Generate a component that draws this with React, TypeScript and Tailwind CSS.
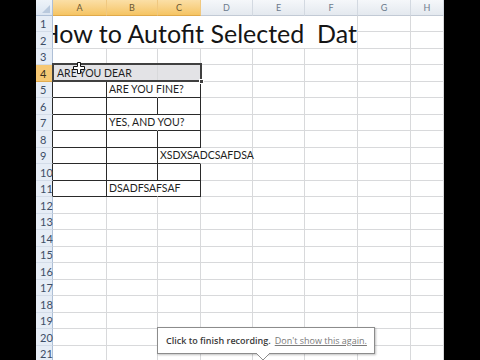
import React from 'react';

type Key = 'grid' | 'dark' | 'none';

const RIGHT: Record<Key, string> = {
  grid: 'border-r border-r-[#d8d9db]',
  dark: 'border-r border-r-[#2a2a2a]',
  none: 'border-r border-r-transparent',
};
const BOTTOM: Record<Key, string> = {
  grid: 'border-b border-b-[#d8d9db]',
  dark: 'border-b border-b-[#2a2a2a]',
  none: 'border-b border-b-transparent',
};

const LETTERS = ['A', 'B', 'C', 'D', 'E', 'F', 'G', 'H'];

const TEXTS: Record<string, string> = {
  '4-1': 'ARE YOU DEAR',
  '5-2': 'ARE YOU FINE?',
  '7-2': 'YES, AND YOU?',
  '9-3': 'XSDXSADCSAFDSA',
  '11-2': 'DSADFSAFSAF',
};

function rightKey(r: number, c: number): Key {
  if (r >= 5 && r <= 11 && c <= 3) {
    if ((r === 5 || r === 7 || r === 11) && c === 2) return 'none';
    if (r === 9 && c === 3) return 'none';
    return 'dark';
  }
  if (r === 4 && c === 1) return 'none';
  return 'grid';
}

function bottomKey(r: number, c: number): Key {
  if (r >= 4 && r <= 11 && c <= 3) return 'dark';
  return 'grid';
}

function Cursor() {
  return (
    <svg width="12" height="12" viewBox="0 0 12 12" className="absolute left-[20px] top-[-3px] z-20">
      <path d="M4.5 0.5h3v4h4v3h-4v4h-3v-4h-4v-3h4z" fill="#fff" stroke="#111" strokeWidth="1" />
    </svg>
  );
}

function Cell({ r, c }: { r: number; c: number }) {
  const text = TEXTS[`${r}-${c}`];
  const sel = r === 4 && c <= 3;
  return (
    <div
      className={`relative flex items-end ${RIGHT[rightKey(r, c)]} ${BOTTOM[bottomKey(r, c)]} ${sel ? 'bg-[#e3e3e6]' : ''}`}
    >
      {text && (
        <span
          className={`relative z-[1] whitespace-nowrap text-[10.5px] leading-[12px] text-[#1e1e1e] pb-[2px] ${c === 1 ? 'pl-[4px]' : 'pl-[2px]'}`}
        >
          {text}
        </span>
      )}
      {r === 4 && c === 1 && (
        <>
          <div className="pointer-events-none absolute left-[-1px] top-[-2px] z-10 h-[19px] w-[150px] border-2 border-[#404040]">
            <div className="absolute bottom-[-4px] right-[-4px] h-[5px] w-[5px] border border-white bg-[#404040]" />
          </div>
          <Cursor />
        </>
      )}
    </div>
  );
}

function RowHeader({ r }: { r: number }) {
  const sel = r === 4;
  const darkRight = r >= 5 && r <= 11;
  return (
    <div
      className={`flex items-center pl-[4px] text-[11px] leading-none border-b ${
        sel ? 'bg-[#f6c874] text-[#3a3020] border-b-[#e2ac4f]' : 'bg-[#e6edf6] text-[#3d4d66] border-b-[#d3dce8]'
      } border-r ${darkRight ? 'border-r-[#2a2a2a]' : 'border-r-[#aebfd6]'}`}
    >
      {r}
    </div>
  );
}

export default function App() {
  const rows = Array.from({ length: 21 }, (_, i) => i + 1);
  return (
    <div className="flex h-[360px] w-[480px] overflow-hidden bg-black font-['Lato','Noto_Sans',sans-serif]">
      <div className="w-[36px] shrink-0" />
      <div className="relative h-[360px] w-[408px] shrink-0 overflow-hidden bg-white">
        <div className="grid grid-cols-[17px_54px_51px_43px_52px_52px_53px_53px_33px] grid-rows-[16px_16px_17px_16px_17px_16px_17px_16px_17px_16px_17px_16px_17px_16px_17px_16px_17px_16px_17px_16px_17px_16px]">
          {/* corner */}
          <div className="relative border-r border-b border-r-[#aebfd6] border-b-[#aebfd6] bg-gradient-to-b from-[#eef3f9] to-[#dbe5f1]">
            <svg width="8" height="8" viewBox="0 0 8 8" className="absolute bottom-[2px] right-[2px]">
              <path d="M8 0L8 8L0 8Z" fill="#b9c9dd" />
            </svg>
          </div>
          {LETTERS.map((l, i) => {
            const sel = i < 3;
            return (
              <div
                key={l}
                className={`flex items-center justify-center text-[9px] leading-none border-r border-b ${
                  sel
                    ? 'bg-gradient-to-b from-[#fbdfa6] to-[#f5c462] text-[#6a5632] border-r-[#f0c880] border-b-[#e0a94a]'
                    : 'bg-gradient-to-b from-[#f5f7fa] to-[#e4e9ef] text-[#6d7b8d] border-r-[#d3d9e1] border-b-[#c2cad5]'
                }`}
              >
                {l}
              </div>
            );
          })}
          {rows.map((r) => {
            if (r === 1) {
              return (
                <React.Fragment key={r}>
                  <RowHeader r={1} />
                  <div className="col-span-6 row-span-2 flex items-center justify-center overflow-hidden border-r border-b border-r-[#d8d9db] border-b-[#d8d9db]">
                    <span className="whitespace-pre text-[25px] leading-none tracking-[0px] text-[#151515] pt-[2px]">
                      {'How to Autofit Selected  Data'}
                    </span>
                  </div>
                  <Cell r={1} c={7} />
                  <Cell r={1} c={8} />
                </React.Fragment>
              );
            }
            if (r === 2) {
              return (
                <React.Fragment key={r}>
                  <RowHeader r={2} />
                  <Cell r={2} c={7} />
                  <Cell r={2} c={8} />
                </React.Fragment>
              );
            }
            return (
              <React.Fragment key={r}>
                <RowHeader r={r} />
                {LETTERS.map((_, i) => (
                  <Cell key={i} r={r} c={i + 1} />
                ))}
              </React.Fragment>
            );
          })}
        </div>

        {/* recording balloon */}
        <div className="absolute left-[121px] top-[327px] z-30 flex h-[27px] w-[218px] items-center border border-[#8c8c8c] bg-white pl-[8px] text-[9px] shadow-[1px_1px_2px_rgba(0,0,0,0.25)] font-['Open_Sans',sans-serif]">
          <span className="font-semibold text-[#3a3a3a]">Click to finish recording.</span>
          <span className="ml-[4px] text-[#7a7a7a] underline">Don&apos;t show this again.</span>
          <svg width="14" height="8" viewBox="0 0 14 8" className="absolute bottom-[-8px] left-[98px]">
            <path d="M0 0L7 7L14 0" fill="#fff" stroke="#8c8c8c" strokeWidth="1" />
          </svg>
        </div>
      </div>
      <div className="w-[36px] shrink-0" />
    </div>
  );
}
